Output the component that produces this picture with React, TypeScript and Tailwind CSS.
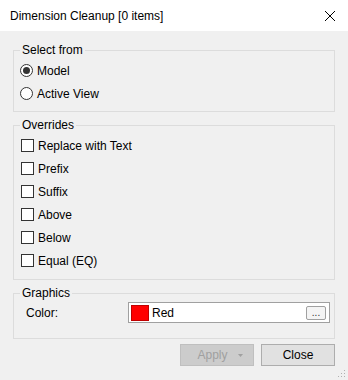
import React from 'react';

const font = { fontFamily: '"Liberation Sans", Arial, sans-serif' };

const Radio = ({ label, checked }: { label: string; checked?: boolean }) => (
  <div className="flex h-[23px] items-center">
    <span className="ml-[6px] flex h-[13px] w-[13px] items-center justify-center rounded-full border border-[#333333] bg-white">
      {checked && <span className="h-[7px] w-[7px] rounded-full bg-[#333333]" />}
    </span>
    <span className="ml-[4px] text-[12px] text-black">{label}</span>
  </div>
);

const Check = ({ label }: { label: string }) => (
  <div className="flex h-[23px] items-center">
    <span className="ml-[7px] h-[13px] w-[13px] border border-[#333333] bg-white" />
    <span className="ml-[4px] text-[12px] text-black">{label}</span>
  </div>
);

const Group = ({ title, children, className }: { title: string; children: React.ReactNode; className?: string }) => (
  <fieldset className={`border border-[#dcdcdc] ${className ?? ''}`}>
    <legend className="ml-[6px] px-[2px] text-[12px] leading-[16px] text-black">{title}</legend>
    {children}
  </fieldset>
);

export default function App() {
  return (
    <div className="flex h-[380px] w-[348px] flex-col bg-[#f0f0f0]" style={font}>
      {/* title bar */}
      <div className="flex h-[31px] items-center justify-between bg-white pl-[10px] pr-[10px]">
        <span className="text-[12px] text-black">Dimension Cleanup [0 items]</span>
        <svg width="12" height="12" viewBox="0 0 12 12" className="mr-[2px]">
          <path d="M1 1L11 11M11 1L1 11" stroke="#000" strokeWidth="1" />
        </svg>
      </div>

      <div className="flex flex-col px-[13px] pt-[11px]">
        <Group title="Select from" className="pt-[1px] pb-[6px]">
          <Radio label="Model" checked />
          <Radio label="Active View" />
        </Group>

        <Group title="Overrides" className="mt-[5px] pt-[1px] pb-[7px]">
          <Check label="Replace with Text" />
          <Check label="Prefix" />
          <Check label="Suffix" />
          <Check label="Above" />
          <Check label="Below" />
          <Check label="Equal (EQ)" />
        </Group>

        <Group title="Graphics" className="mt-[5px] pt-[1px] pb-[15px]">
          <div className="flex items-center">
            <span className="ml-[12px] w-[102px] text-[12px] text-black">Color:</span>
            <div className="flex h-[21px] w-[202px] items-center border border-[#a0a0a0] bg-white pl-[2px] pr-[3px]">
              <span className="h-[16px] w-[18px] border border-[#c00000] bg-[#ff0000]" />
              <span className="ml-[3px] flex-1 text-[12px] text-black">Red</span>
              <span className="flex h-[14px] w-[20px] items-end justify-center rounded-[2px] border border-[#a0a0a0] bg-[#f4f4f4] pb-[2px] text-[10px] leading-[8px] text-[#333]">
                ...
              </span>
            </div>
          </div>
        </Group>

        <div className="mt-[5px] flex justify-end gap-[7px]">
          <div className="flex h-[22px] w-[74px] items-center justify-center gap-[10px] border border-[#bfbfbf] bg-[#cccccc] text-[12px] text-[#a0a0a0]">
            <span className="ml-[6px]">Apply</span>
            <svg width="5" height="3" viewBox="0 0 5 3">
              <path d="M0 0H5L2.5 3Z" fill="#a0a0a0" />
            </svg>
          </div>
          <div className="flex h-[22px] w-[74px] items-center justify-center border border-[#adadad] bg-[#e1e1e1] text-[12px] text-black">
            Close
          </div>
        </div>
      </div>
      <div className="flex flex-1 items-end justify-end pb-[2px] pr-[2px]">
        <svg width="10" height="10" viewBox="0 0 10 10">
          <rect x="8" y="2" width="1" height="1" fill="#b0b0b0" />
          <rect x="5" y="5" width="1" height="1" fill="#b0b0b0" />
          <rect x="8" y="5" width="1" height="1" fill="#b0b0b0" />
          <rect x="2" y="8" width="1" height="1" fill="#b0b0b0" />
          <rect x="5" y="8" width="1" height="1" fill="#b0b0b0" />
          <rect x="8" y="8" width="1" height="1" fill="#b0b0b0" />
        </svg>
      </div>
    </div>
  );
}
